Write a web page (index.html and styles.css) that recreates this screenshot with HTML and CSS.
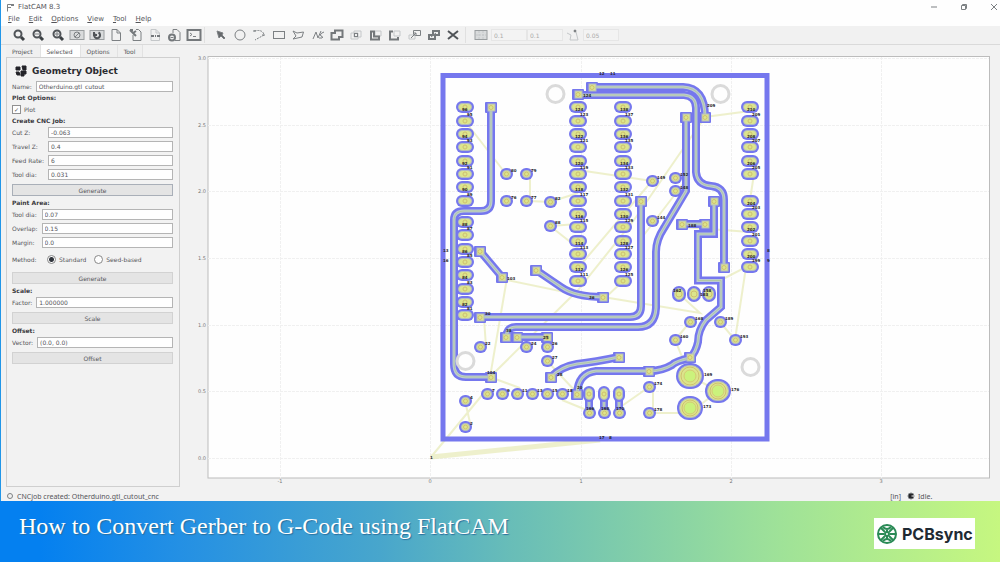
FILE: index.html
```html
<!DOCTYPE html>
<html lang="en">
<head>
    <meta charset="UTF-8">
    <meta name="viewport" content="width=device-width, initial-scale=1.0">
    <title>How to Convert Gerber to G-Code using FlatCAM</title>
    <link rel="stylesheet" href="styles.css">
</head>
<body>

    <div class="app">
        <header class="titlebar">
            <svg class="app-icon" viewBox="0 0 9 9"><path d="M1.5 8.5V1.5H8M1.5 4.5H5M5 2.5H8" /></svg>
            <span class="app-name">FlatCAM 8.3</span>
            <div class="window-buttons">
                <button aria-label="Minimize"><svg viewBox="0 0 8 8"><path d="M1 4H7" /></svg></button>
                <button aria-label="Restore"><svg viewBox="0 0 8 8"><path d="M1.5 2.5H5.5V6.5H1.5ZM2.5 2.5V1.5H6.5V5.5H5.5" /></svg></button>
                <button aria-label="Close"><svg viewBox="0 0 8 8"><path d="M1 1L7 7M7 1L1 7" /></svg></button>
            </div>
        </header>

        <nav class="menu">
            <a href="#"><u>F</u>ile</a>
            <a href="#"><u>E</u>dit</a>
            <a href="#"><u>O</u>ptions</a>
            <a href="#"><u>V</u>iew</a>
            <a href="#"><u>T</u>ool</a>
            <a href="#"><u>H</u>elp</a>
        </nav>

        <div class="toolbar">
            <div class="tools tools-main">
                <button aria-label="Zoom fit"><svg viewBox="0 0 16 16"><circle class="thick" cx="7" cy="7" r="3.5" /><path class="handle" d="M10 10L13 13" /></svg></button>
                <button aria-label="Zoom out"><svg viewBox="0 0 16 16"><circle class="thick" cx="7" cy="7" r="3.5" /><path class="handle" d="M10 10L13 13" /><path d="M5 7H9" /></svg></button>
                <button aria-label="Zoom in"><svg viewBox="0 0 16 16"><circle class="thick" cx="7" cy="7" r="3.5" /><path class="handle" d="M10 10L13 13" /><path d="M5 7H9M7 5V9" /></svg></button>
                <button aria-label="Clear plot"><svg viewBox="0 0 16 16"><rect class="shade" x="1" y="3.5" width="14" height="9" /><circle cx="8" cy="8" r="3" /><path d="M6 10L10 6" /></svg></button>
                <button aria-label="Replot"><svg viewBox="0 0 16 16"><rect class="shade" x="1" y="3.5" width="14" height="9" /><path class="thick" d="M6 6A3 3 0 1 0 9.5 5.5M5 5V8H8" /></svg></button>
                <button aria-label="New geometry"><svg viewBox="0 0 16 16"><path d="M4 2.5H9L12.5 6V13.5H4ZM9 2.5V6H12.5" /></svg></button>
                <button aria-label="Edit geometry"><svg viewBox="0 0 16 16"><path d="M5 8V13.5H13V5L10.5 2.5H8" /><path class="heavy" d="M2 3L8 9M2 3H5M5 6L8 4" /></svg></button>
                <button aria-label="Update geometry"><svg viewBox="0 0 16 16"><path class="pale" d="M4 2.5H9L12.5 6V13.5H4ZM9 2.5V6H12.5" /><path class="heavy" d="M4 9H7M8 9H9M10 9H13" /></svg></button>
                <button aria-label="Delete"><svg viewBox="0 0 16 16"><path d="M6 6V2.5H10L13 5.5V13.5H8" /><circle class="heavy" cx="5" cy="10.5" r="3" /><path d="M3.5 10.5H6.5" /></svg></button>
                <button aria-label="Shell"><svg viewBox="0 0 16 16"><rect class="heavy" x="1.5" y="3" width="13" height="10" /><path d="M4 6L6 7.5L4 9M7 9.5H10" /></svg></button>
            </div>
            <div class="tools tools-draw">
                <button aria-label="Select"><svg viewBox="0 0 16 16"><path class="solid" d="M4 4L10 6L9 8L12 11L11 12L8 9L6 11Z" /></svg></button>
                <button aria-label="Circle"><svg viewBox="0 0 16 16"><circle cx="8" cy="8" r="5" /></svg></button>
                <button aria-label="Arc"><svg viewBox="0 0 16 16"><path class="dash" d="M3 4Q12 2 13 8L4 13" /><path d="M2 4H5M11 8H14" /></svg></button>
                <button aria-label="Rectangle"><svg viewBox="0 0 16 16"><rect x="2.5" y="4.5" width="11" height="7" /></svg></button>
                <button aria-label="Polygon"><svg viewBox="0 0 16 16"><path d="M3 4L7 6L13.5 5L12 10L3 12L6 9Z" /></svg></button>
                <button aria-label="Path"><svg viewBox="0 0 16 16"><path d="M3 12L6 5L8 11L11 4M14 5Q9 7 11 9Q14 10 12 11H9" /></svg></button>
                <button aria-label="Union"><svg viewBox="0 0 16 16"><path class="heavy" d="M2.500 6H6V3.500H13.500V10H10V12.500H2.500Z" /></svg></button>
                <button aria-label="Intersection"><svg viewBox="0 0 16 16"><path class="pale" d="M3 6H10V12H3ZM6 4H13V10H6Z" /><rect x="6.500" y="6.500" width="3" height="3" /></svg></button>
                <button aria-label="Subtract"><svg viewBox="0 0 16 16"><path class="pale" d="M7 4H13V9H7Z" /><path class="heavy" d="M3 4.500H6V9.500H11V12.500H3Z" /></svg></button>
                <button aria-label="Cut path"><svg viewBox="0 0 16 16"><path class="pale" d="M7 4H13V9H7Z" /><path class="heavy" d="M6 4.500H3V12.500H11V10" /></svg></button>
                <button aria-label="Move"><svg viewBox="0 0 16 16"><path d="M6.500 3.500H13.500V8.500H6.500Z" /><path class="pale" d="M2 8H8V12H2Z" /><path d="M4 11L9 6M6 6H9V9" /></svg></button>
                <button aria-label="Copy"><svg viewBox="0 0 16 16"><path class="heavy" d="M7 4H13V8H7ZM3 8H9V12H3Z" /><path d="M5 10L10 6" /></svg></button>
                <button aria-label="Delete shape"><svg viewBox="0 0 16 16"><path class="thick" d="M3 4L13 12M13 4L3 12" /></svg></button>
            </div>
            <div class="snap">
                <svg viewBox="0 0 16 16"><rect class="shade" x="2" y="3.5" width="12" height="9" /><path class="dash pale" d="M6 4V12M10 4V12M3 8H13" /></svg>
                <input type="text" aria-label="Grid X" value="0.1">
                <input type="text" aria-label="Grid Y" value="0.1">
                <svg viewBox="0 0 16 16"><path class="pale" d="M2 6L6 8L5 13H13L11 5" /><circle class="solid" cx="10" cy="4" r="1" /></svg>
                <input type="text" aria-label="Snap distance" value="0.05">
            </div>
        </div>

        <main class="workspace">
            <aside class="sidebar">
                <div class="tabs">
                    <button>Project</button>
                    <button class="active">Selected</button>
                    <button>Options</button>
                    <button>Tool</button>
                </div>

                <form class="panel">
                    <h1>
                        <svg viewBox="0 0 12 12"><path d="M1 2H5V5H1ZM7 1H11V5H8ZM1 7H4L5 10H2ZM6 6H11V9H9V11H6Z" /></svg>
                        Geometry Object
                    </h1>
                    <div class="fields">
                        <label for="name">Name:</label><input type="text" id="name" value="Otherduino.gtl_cutout">
                    </div>

                    <h2>Plot Options:</h2>
                    <label class="check"><input type="checkbox" checked>Plot</label>

                    <h2>Create CNC Job:</h2>
                    <div class="fields">
                        <label for="cutz">Cut Z:</label><input type="text" id="cutz" value="-0.063">
                        <label for="travelz">Travel Z:</label><input type="text" id="travelz" value="0.4">
                        <label for="feed">Feed Rate:</label><input type="text" id="feed" value="6">
                        <label for="tooldia">Tool dia:</label><input type="text" id="tooldia" value="0.031">
                    </div>
                    <button type="button" class="btn focused">Generate</button>

                    <h2>Paint Area:</h2>
                    <div class="fields">
                        <label for="paintdia">Tool dia:</label><input type="text" id="paintdia" value="0.07">
                        <label for="overlap">Overlap:</label><input type="text" id="overlap" value="0.15">
                        <label for="margin">Margin:</label><input type="text" id="margin" value="0.0">
                    </div>
                    <div class="method">
                        <span>Method:</span>
                        <label><input type="radio" name="method" checked>Standard</label>
                        <label><input type="radio" name="method">Seed-based</label>
                    </div>
                    <button type="button" class="btn">Generate</button>

                    <h2>Scale:</h2>
                    <div class="fields">
                        <label for="factor">Factor:</label><input type="text" id="factor" value="1.000000">
                    </div>
                    <button type="button" class="btn">Scale</button>

                    <h2>Offset:</h2>
                    <div class="fields">
                        <label for="vector">Vector:</label><input type="text" id="vector" value="(0.0, 0.0)">
                    </div>
                    <button type="button" class="btn">Offset</button>
                </form>
            </aside>

            <svg class="plot" viewBox="184 45 816 442">
                <rect class="frame" x="208" y="56.5" width="781.5" height="421.5" />
                <g id="grid"></g>
                <g class="travel">
                    <path class="wide" d="M431 457L600 440" />
                    <path d="M431 457L483 394M465 401L471 427M465 121L506 174M530 174V201L550 202L578 193M550 226L578 224M550 226L578 248M578 170L652 181L578 268M490 377L578 290L634 220L705 117L750 111" />
                    <path d="M484 318L486 347M507 278L490 377L520 388M507 280L603 300L623 281M603 297L700 313L679 294M547 361L578 394M562 400L589 411M619 408L649 387M653 387V413H690L718 391L690 376L675 340L690 322M720 322L735 340L746 267L721 280M754 174L750 200M682 227L750 232M686 180L640 240" />
                </g>
                <rect class="cutout" x="443" y="75.5" width="324" height="363.5" />
                <g id="traces"></g>
                <g id="pads"></g>
                <g id="labels"></g>
            </svg>
        </main>

        <footer class="status">
            <svg viewBox="0 0 8 8"><circle cx="4" cy="4" r="2.5" /></svg>
            <span class="message">CNCjob created: Otherduino.gtl_cutout_cnc</span>
            <span class="units">[in]</span>
            <svg viewBox="0 0 8 8"><circle class="fill" cx="4" cy="4" r="3" /><path class="notch" d="M4.5 4H7" /></svg>
            <span class="idle">Idle.</span>
        </footer>
    </div>

    <div class="banner">
        <p>How to Convert Gerber to G-Code using FlatCAM</p>
        <a class="brand" href="#">
            <svg viewBox="0 0 20 20">
                <circle cx="10" cy="10" r="9" />
                <path d="M1 10H7M13 10H19M4 4L8 8M16 4L12 8M4 16L8 12M16 16L12 12M6 3Q10 7 14 3M6 17Q10 13 14 17M10 5V8M10 12V15" />
                <circle cx="10" cy="10" r="2" />
            </svg>
            PCBsync
        </a>
    </div>

    <script>
        var grid = '';
        var traces = '';
        var pads = '';
        var labels = '';

        function label(x, y, text) {
            labels += '<text x="' + x + '" y="' + y + '">' + text + '</text>';
        }

        // Plot axes
        var rows = [[58, '3.0'], [125, '2.5'], [191, '2.0'], [258, '1.5'], [325, '1.0'], [391, '0.5'], [458, '0.0']];
        rows.forEach(function(r) {
            grid += '<path d="M208 ' + r[0] + '.5H989" /><text x="206" y="' + (r[0] + 2) + '" text-anchor="end">' + r[1] + '</text>';
        });
        var cols = [[280, '-1'], [430, '0'], [581, '1'], [731, '2'], [881, '3']];
        cols.forEach(function(c) {
            grid += '<path d="M' + c[0] + '.5 57V478" /><text x="' + c[0] + '" y="483" text-anchor="middle">' + c[1] + '</text>';
        });

        // Copper traces
        var paths = [
            'M491 107V201Q491 211 481 211H464Q454 211 454 220V364Q454 377 466 377H491',
            'M592 87H683Q705 88 705 117',
            'M578 95H684Q696 96 696 108V172Q697 185 711 186Q724 187 724 200V267',
            'M686 117V191L664 228Q656 240 656 252V308Q655 327 638 327H516Q507 327 506 337',
            'M641 201V306Q641 317 630 317H480',
            'M714 201V234H698V280.5H721V307L706 320Q698 330 698 342Q696 352 690 358Q676 361 672 365Q662 371 649 371H596Q578 373 577 394',
            'M682 224H705',
            'M480 251L502 277',
            'M536 270L561 287Q575 297 603 297',
            'M517 337H547',
            'M551 377Q560 367 577 364Q595 362 619 357',
            'M589 394V413',
            'M604 394V413',
            'M619 394V413'
        ];
        paths.forEach(function(d) {
            traces += '<path class="cut" d="' + d + '" />';
        });

        // square pads
        var squares = [[491, 107], [578, 94], [592, 87], [686, 117], [705, 117], [641, 201], [714, 201], [682, 224], [705, 224],
            [724, 267], [480, 251], [502, 277], [536, 270], [603, 297], [480, 317], [506, 337], [517, 337], [547, 337],
            [491, 377], [551, 377], [619, 357], [649, 371], [690, 357], [577, 394]];
        squares.forEach(function(s) {
            traces += '<rect class="edge" x="' + (s[0] - 6) + '" y="' + (s[1] - 5) + '" width="12" height="11" rx="1" />';
            pads += '<rect class="copper" x="' + (s[0] - 3) + '" y="' + (s[1] - 3) + '" width="7" height="7" />';
            pads += '<circle class="hole" cx="' + s[0] + '" cy="' + (s[1] + 0.5) + '" r="2" />';
        });
        paths.forEach(function(d) {
            traces += '<path class="core" d="' + d + '" /><path class="line" d="' + d + '" />';
        });

        function oval(x, y, rx, ry) {
            var r = Math.min(rx, ry);
            pads += '<rect class="edge" x="' + (x - rx) + '" y="' + (y - ry) + '" width="' + rx * 2 + '" height="' + ry * 2 + '" rx="' + r + '" />';
            pads += '<rect class="copper" x="' + (x - rx + 2.5) + '" y="' + (y - ry + 2.5) + '" width="' + (rx * 2 - 5) + '" height="' + (ry * 2 - 5) + '" rx="' + (r - 2.5) + '" />';
            pads += '<circle class="hole" cx="' + x + '" cy="' + y + '" r="' + (r - 4) + '" />';
        }

        // header strips
        var a = [107, 121, 134, 147, 161, 174, 187, 201];
        var strips = [
            [465, a.concat([222, 235, 249, 262, 275, 289, 302, 315]), 96],
            [578, a.concat([214, 227, 241, 254, 267, 281]), 124],
            [623, a.concat([214, 227, 241, 254, 267, 281]), 138],
            [750, [107, 121, 134, 147, 161, 174, 201, 214, 227, 241, 254, 267], 210]
        ];
        strips.forEach(function(s) {
            s[1].forEach(function(y, i) {
                oval(s[0], y, 9, 6);
                if (i % 2) {
                    label(s[0] + 2, y - 5, s[2] - i);
                } else {
                    label(s[0] - 3, y + 4, s[2] - i);
                }
            });
        });
        [679, 694, 709].forEach(function(x) { oval(x, 294, 7, 8); });
        [589, 604, 619].forEach(function(x) { oval(x, 394, 6, 8); });

        // round vias: x, y, label
        var vias = [[506, 174, 80], [526, 174, 79], [506, 201, 76], [526, 201, 77], [550, 202, 82], [550, 226, 88],
            [652, 181, 149], [675, 178, 152], [675, 191, 148], [652, 221, 144], [480, 347, 22], [526, 347, 24], [547, 347, 26],
            [547, 361, 27], [465, 401, 4], [465, 427, 2], [487, 394, 7], [502, 394, 9], [517, 394, 11], [532, 394, 13],
            [547, 394, 15], [562, 394, 18], [589, 413, ''], [604, 413, ''], [619, 413, ''], [649, 387, 174], [649, 413, 178],
            [690, 322, 168], [720, 322, 189], [675, 340, 160], [735, 340, 193]];
        vias.forEach(function(v) {
            oval(v[0] + 0.5, v[1], 6.5, 6);
            label(v[0] + 5, v[1] - 2, v[2]);
        });
        [[690, 376, 14], [718, 391, 13], [690, 408, 13]].forEach(function(p) {
            oval(p[0], p[1], p[2], p[2] - 1);
            pads += '<circle class="drill" cx="' + p[0] + '" cy="' + p[1] + '" r="6" />';
        });

        // mounting holes
        [[555, 94], [720, 94], [465, 361], [750, 367]].forEach(function(p) {
            pads += '<circle class="mount" cx="' + p[0] + '.5" cy="' + p[1] + '" r="8.5" />';
        });

        [[599, 75, '12'], [610, 75, '11'], [599, 439, '17'], [609, 439, '8'], [443, 252, '13'], [443, 262, '16'], [767, 252, '8'], [767, 262, '9'],
            [583, 97, '124'], [707, 107, '209'], [688, 227, '188'], [673, 292, '162'], [700, 296, '183'], [703, 292, '158'], [507, 280, '103'],
            [589, 299, '36'], [485, 315, '30'], [506, 332, '38'], [543, 339, '25'], [487, 374, '104'], [557, 376, '28'], [577, 389, '20'],
            [586, 410, '166'], [601, 410, '168'], [616, 410, '170'], [704, 376, '169'], [731, 391, '176'], [703, 408, '173'], [430, 459, '1']
        ].forEach(function(l) { label(l[0], l[1], l[2]); });

        document.getElementById('grid').innerHTML = grid;
        document.getElementById('traces').innerHTML = traces;
        document.getElementById('pads').innerHTML = pads;
        document.getElementById('labels').innerHTML = labels;
    </script>

</body>
</html>
```
FILE: styles.css
```css
* {
    box-sizing: border-box;
}

body {
    margin: 0;
    min-height: 100vh;
    display: flex;
    flex-direction: column;
    font-family: "DejaVu Sans", Verdana, sans-serif;
    font-size: 6px;
    color: #55555a;
    background: #f2f2f2;
}

button, input {
    font: inherit;
    color: inherit;
    margin: 0;
    padding: 0;
}

a {
    color: inherit;
    text-decoration: none;
}

svg {
    display: block;
    fill: none;
    stroke: #7c8083;
    stroke-width: 1;
}

.app {
    flex: 1;
    display: flex;
    flex-direction: column;
    border-left: 1px solid #2196e8;
}

/* Title bar and menu */
.titlebar {
    display: flex;
    align-items: center;
    gap: 3px;
    height: 14px;
    padding-left: 5px;
    background: #fefefe;
    font-size: 7px;
}

.app-icon {
    width: 9px;
    height: 9px;
}

.window-buttons {
    display: flex;
    gap: 22px;
    margin-left: auto;
    padding-right: 2px;
}

.window-buttons button {
    width: 8px;
    height: 8px;
    border: none;
    background: none;
}

.menu {
    display: flex;
    gap: 9px;
    height: 12px;
    padding-left: 7px;
    background: #fefefe;
    line-height: 11px;
    font-size: 7px;
}

/* Toolbar */
.toolbar {
    display: flex;
    align-items: center;
    height: 19px;
    padding-left: 8px;
    background: #f1f1f1;
    border-bottom: 1px solid #dadada;
}

.toolbar svg {
    width: 16px;
    height: 16px;
    margin: 0 auto;
}

.tools {
    display: flex;
    border-right: 1px solid #e0e0e0;
}

.tools-main {
    width: 196px;
    margin-right: 6px;
}

.tools-draw {
    width: 255px;
    padding-right: 2px;
}

.tools button {
    flex: 1;
    border: none;
    background: none;
}

.toolbar .heavy {
    stroke: #74787b;
    stroke-width: 2;
}

.toolbar .thick {
    stroke-width: 2;
    stroke: #505458;
}

.toolbar .handle {
    stroke-width: 3;
    stroke: #3c4044;
}

.toolbar .pale {
    stroke: #c4c7c9;
}

.toolbar .shade {
    fill: #d9dbdc;
    stroke: #9a9ea0;
}

.toolbar .solid {
    fill: #66696c;
}

.toolbar .dash {
    stroke-dasharray: 2 1;
}

.snap {
    display: flex;
    align-items: center;
    margin-left: 5px;
    color: #aaa;
}

.snap input {
    width: 36px;
    height: 12px;
    padding-left: 2px;
    border: 1px solid #e6e6e6;
    background: #f3f3f3;
}

.snap svg {
    margin: 0 2px;
}

/* Sidebar */
.workspace {
    flex: 1;
    display: flex;
    align-items: stretch;
}

.sidebar {
    flex: none;
    width: 183px;
    display: flex;
    flex-direction: column;
    padding: 0 4px 0 5px;
}

.tabs {
    display: flex;
    height: 12px;
}

.tabs button {
    padding: 0 7px 0 6px;
    border: none;
    border-right: 1px solid #e2e2e2;
    background: #f0f0f0;
}

.tabs .active {
    background: #fefefe;
}

.panel {
    flex: 1;
    padding: 5px 6px 0 5px;
    border: 1px solid #cfcfcf;
}

.panel h1 {
    display: flex;
    align-items: center;
    gap: 5px;
    height: 15px;
    margin: 0 0 3px;
    padding-left: 3px;
    font-size: 9px;
    color: #2b2b30;
}

.panel h1 svg {
    width: 12px;
    height: 12px;
    fill: #232328;
    stroke: #232328;
}

.panel h2 {
    margin: 1px 0;
    line-height: 10px;
    font-size: 6px;
    color: #3a3a40;
}

.fields {
    display: grid;
    grid-template-columns: auto 1fr;
    gap: 3px 4px;
    align-items: center;
}

.fields input {
    width: 100%;
    height: 11px;
    padding: 0 2px;
    border: 1px solid #b4b4b4;
    background: #fefefe;
    line-height: 9px;
}

.check, .method, .method label {
    display: flex;
    align-items: center;
}

.check {
    gap: 3px;
    height: 11px;
}

.check input {
    width: 9px;
    height: 9px;
    appearance: none;
    border: 1px solid #909090;
    background: #fefefe;
}

.check input:checked::before {
    content: "✓";
    display: block;
    line-height: 7px;
    text-align: center;
}

.method {
    height: 12px;
    margin: 5px 0 7px;
    gap: 8px;
}

.method span {
    width: 27px;
}

.method label {
    gap: 3px;
}

.method input {
    width: 9px;
    height: 9px;
    appearance: none;
    border: 1px solid #888;
    border-radius: 50%;
    background: #fefefe;
}

.method input:checked {
    background: radial-gradient(circle, #30343c 2px, #fefefe 3px);
}

.btn {
    display: block;
    width: 100%;
    height: 12px;
    margin: 4px 0 2px;
    border: 1px solid #d2d2d2;
    background: #e4e4e4;
}

.btn.focused {
    border-color: #a9afb8;
}

/* Plot */
.plot {
    flex: 1;
    min-width: 0;
    height: auto;
    font-size: 5px;
}

.plot text {
    stroke: none;
    fill: #777;
}

.frame {
    fill: #fefefe;
    stroke: #bcbcbc;
}

#grid path {
    stroke: #f0f0f0;
    stroke-dasharray: 3 1;
}

.travel {
    stroke: #e8ebb8;
    stroke-width: 2;
    opacity: 0.7;
}

.travel .wide {
    stroke-width: 5;
}

.cutout {
    stroke: #7577ee;
    stroke-width: 5;
}

.cut {
    stroke: #7577ee;
    stroke-width: 8;
}

.core {
    stroke: #bccbd2;
    stroke-width: 3;
}

.line {
    stroke: #b2c9a4;
}

.edge {
    fill: #7577ee;
    stroke: none;
}

.copper {
    fill: #dce58c;
    stroke: #b3bcc0;
}

.hole {
    stroke: #cfc070;
}

.drill {
    fill: #cbf27c;
    stroke: #d3cc73;
}

.mount {
    stroke: #dadada;
    stroke-width: 3;
}

#labels text {
    font-size: 4px;
    font-weight: bold;
    fill: #26262a;
}

/* Status bar */
.status {
    display: flex;
    align-items: center;
    height: 14px;
    padding: 4px 0 0 5px;
    font-family: "Noto Sans", sans-serif;
    font-size: 7px;
}

.status svg {
    width: 8px;
    height: 8px;
}

.message {
    margin-left: 3px;
}

.units {
    margin-left: auto;
    margin-right: 6px;
}

.status .fill {
    fill: #26262a;
}

.status .notch {
    stroke: #f2f2f2;
}

.idle {
    width: 85px;
    padding-left: 3px;
}

/* Banner */
.banner {
    display: flex;
    align-items: center;
    justify-content: space-between;
    height: 61px;
    padding: 0 25px 0 19px;
    background: linear-gradient(90deg, #0480f0 4%, #2490e4 18%, #48a6cc 38%, #68bdb8 51%, #9fe298 78%, #c6f780);
}

.banner p {
    margin: 0 0 12px;
    font-family: "Liberation Serif", serif;
    font-size: 24px;
    line-height: 30px;
    color: #fff;
    text-shadow: 1px 1px 1px #2a6f9c;
}

.brand {
    display: flex;
    align-items: center;
    gap: 5px;
    width: 101px;
    height: 31px;
    margin-top: 4px;
    padding-left: 3px;
    background: #fff;
    font-family: Inter, sans-serif;
    font-size: 16px;
    font-weight: bold;
    color: #1f2a33;
}

.brand svg {
    width: 20px;
    height: 20px;
    stroke: #2a8a56;
    stroke-width: 2;
}
```
